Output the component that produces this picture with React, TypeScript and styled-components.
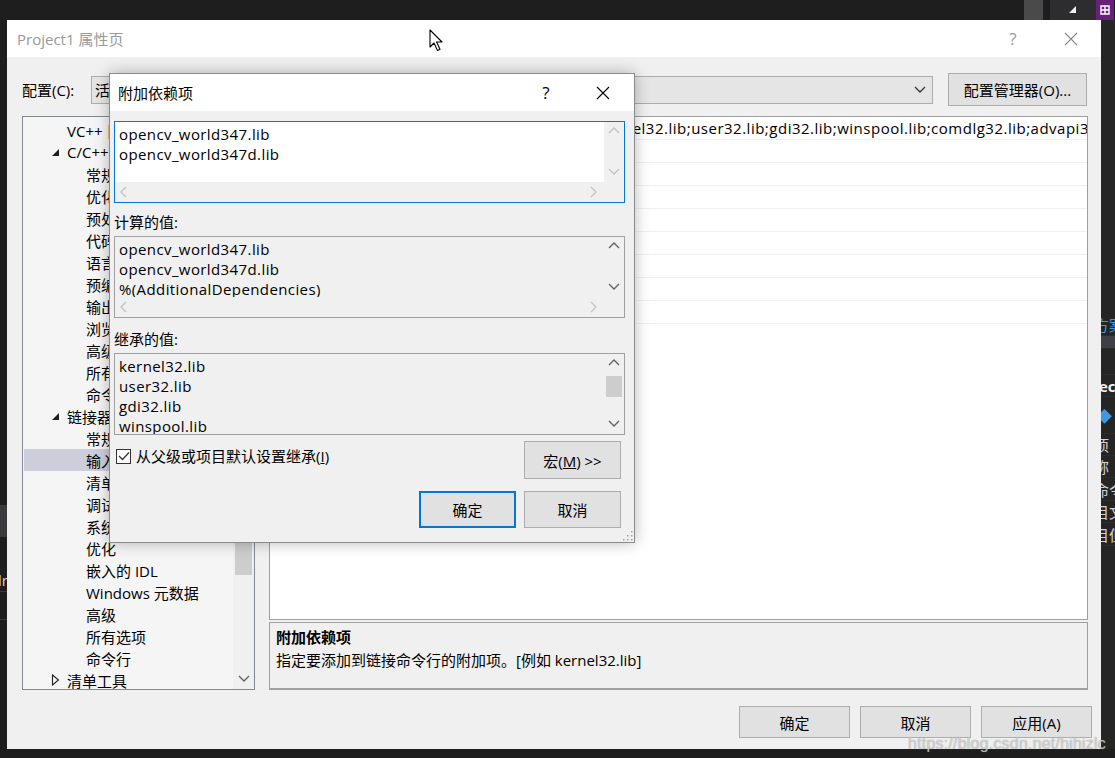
import React from 'react';
import styled, { createGlobalStyle } from 'styled-components';

const GlobalStyle = createGlobalStyle`
  html, body {
    margin: 0;
    padding: 0;
    background: #1e1e1e;
  }
  body {
    font-family: 'Segoe UI', 'Open Sans', 'Noto Sans CJK SC', sans-serif;
  }
`;

const FONT = `'Segoe UI', 'Open Sans', 'Noto Sans CJK SC', sans-serif`;

const Screen = styled.div`
  position: relative;
  width: 1115px;
  height: 758px;
  overflow: hidden;
  display: grid;
  grid-template-columns: 7px 1094px 14px;
  grid-template-rows: 20px 729px 9px;
  background: #1e1e1e;
  font-family: ${FONT};
  color: #000;
`;

/* ---------- dark IDE chrome around the window ---------- */

const TopStrip = styled.div`
  grid-column: 1 / 4;
  display: flex;
  justify-content: flex-end;
  align-items: stretch;
  background: #1e1e1e;
`;

const TopBlock = styled.div<{ $w: number; $bg: string }>`
  width: ${(p) => p.$w}px;
  background: ${(p) => p.$bg};
  display: flex;
  align-items: center;
  justify-content: center;
`;

const LeftStrip = styled.div`
  display: flex;
  flex-direction: column;
  background: #1e1e1e;
  overflow: hidden;
`;

const StripBand = styled.div<{ $h: number; $bg: string; $top?: number }>`
  height: ${(p) => p.$h}px;
  flex: 0 0 ${(p) => p.$h}px;
  margin-top: ${(p) => p.$top ?? 0}px;
  background: ${(p) => p.$bg};
`;

const StripText = styled.div`
  margin-top: 32px;
  margin-left: -2px;
  height: 22px;
  line-height: 22px;
  font-size: 15px;
  color: #cfcfcf;
  white-space: nowrap;
  border-bottom: 1px solid #3a3a3a;
`;

const RightStrip = styled.div`
  display: flex;
  flex-direction: column;
  background: #252526;
  overflow: hidden;
  padding-top: 294px;
  font-size: 15px;
`;

const SideText = styled.div<{ $color: string; $h: number; $bold?: boolean; $shift?: number; $bg?: string }>`
  height: ${(p) => p.$h}px;
  flex: 0 0 ${(p) => p.$h}px;
  box-sizing: border-box;
  display: flex;
  align-items: center;
  white-space: nowrap;
  margin-left: ${(p) => p.$shift ?? -7}px;
  color: ${(p) => p.$color};
  background: ${(p) => p.$bg ?? 'transparent'};
  font-weight: ${(p) => (p.$bold ? 700 : 400)};
  border-bottom: 1px solid #2d2d30;
`;

const BottomStrip = styled.div`
  grid-column: 1 / 4;
  background: #1e1e1e;
`;

/* ---------- property pages window ---------- */

const Window = styled.div`
  display: flex;
  flex-direction: column;
  background: #f0f0f0;
  min-width: 0;
`;

const TitleBar = styled.div<{ $h: number; $pad: number; $color: string }>`
  height: ${(p) => p.$h}px;
  flex: 0 0 ${(p) => p.$h}px;
  display: flex;
  align-items: center;
  background: #fff;
  padding-left: ${(p) => p.$pad}px;
  color: ${(p) => p.$color};
  font-size: 15px;
`;

const TitleText = styled.div`
  flex: 1;
  white-space: nowrap;
`;

const TitleButton = styled.div<{ $w: number }>`
  width: ${(p) => p.$w}px;
  height: 100%;
  display: flex;
  align-items: center;
  justify-content: center;
  font-size: 17px;
`;

const Content = styled.div`
  display: flex;
  flex-direction: column;
  padding: 16px 13px 0 15px;
  min-width: 0;
`;

const ConfigRow = styled.div`
  display: flex;
  align-items: center;
  height: 33px;
  font-size: 15px;
`;

const ConfigLabel = styled.div`
  width: 69px;
  white-space: nowrap;
`;

const Combo = styled.div`
  box-sizing: border-box;
  width: 842px;
  height: 28px;
  border: 1px solid #adadad;
  background: #e5e5e5;
  display: flex;
  align-items: center;
  padding: 0 6px 0 3px;
`;

const ComboText = styled.div`
  flex: 1;
`;

const PushButton = styled.button<{ $w: number; $h: number; $default?: boolean }>`
  box-sizing: border-box;
  width: ${(p) => p.$w}px;
  height: ${(p) => p.$h}px;
  flex: 0 0 ${(p) => p.$w}px;
  background: #e1e1e1;
  border: ${(p) => (p.$default ? '2px solid #0078d7' : '1px solid #adadad')};
  font-family: ${FONT};
  font-size: 15px;
  color: #000;
  padding: 0;
  white-space: nowrap;
`;

const ConfigManager = styled(PushButton)`
  margin-left: 15px;
`;

const MainArea = styled.div`
  margin-top: 10px;
  height: 574px;
  display: grid;
  grid-template-columns: 233px minmax(0, 1fr);
  gap: 14px;
`;

/* tree */

const Tree = styled.div`
  box-sizing: border-box;
  border: 1px solid #828790;
  background: #f5f5f5;
  display: flex;
  overflow: hidden;
`;

const TreeList = styled.div`
  flex: 1;
  padding-top: 2px;
  overflow: hidden;
  font-size: 15px;
`;

const TreeRow = styled.div<{ $level: number; $selected?: boolean }>`
  height: 22px;
  display: flex;
  align-items: center;
  margin-left: 1px;
  padding-left: ${(p) => (p.$level === 1 ? 27 : 46)}px;
  background: ${(p) => (p.$selected ? '#cccedb' : 'transparent')};
  white-space: nowrap;
`;

const Expander = styled.span`
  width: 16px;
  flex: 0 0 16px;
  display: flex;
  align-items: center;
`;

const VScroll = styled.div<{ $w?: number }>`
  width: ${(p) => p.$w ?? 20}px;
  flex: 0 0 ${(p) => p.$w ?? 20}px;
  display: flex;
  flex-direction: column;
  background: #f0f0f0;
`;

const ArrowCell = styled.div`
  height: 20px;
  flex: 0 0 20px;
  display: flex;
  align-items: center;
  justify-content: center;
`;

const Track = styled.div`
  flex: 1;
  display: flex;
  flex-direction: column;
  padding: 0 2px;
`;

const Thumb = styled.div<{ $offset: number; $size: number }>`
  margin-top: ${(p) => p.$offset}px;
  height: ${(p) => p.$size}px;
  background: #cdcdcd;
`;

/* right column */

const RightCol = styled.div`
  display: flex;
  flex-direction: column;
  gap: 2px;
  min-width: 0;
`;

const Grid = styled.div`
  box-sizing: border-box;
  height: 504px;
  border: 1px solid #a0a0a0;
  background: #fff;
  overflow: hidden;
  font-size: 15px;
`;

const GridRow = styled.div`
  height: 23px;
  box-sizing: border-box;
  border-bottom: 1px solid #f0f0f0;
  display: flex;
  align-items: center;
  white-space: nowrap;
`;

const GridName = styled.div`
  width: 329px;
  flex: 0 0 329px;
  padding-left: 6px;
  box-sizing: border-box;
  overflow: hidden;
`;

const GridValue = styled.div`
  flex: 1;
  min-width: 0;
  overflow: hidden;
  letter-spacing: 0.5px;
`;

const DescBox = styled.div`
  flex: 1;
  box-sizing: border-box;
  border: 1px solid #a0a0a0;
  border-bottom-width: 2px;
  background: #f0f0f0;
  padding: 3px 6px;
  font-size: 15px;
  line-height: 23px;
`;

const DescTitle = styled.div`
  font-weight: 700;
`;

const Footer = styled.div`
  display: flex;
  justify-content: flex-end;
  gap: 10px;
  padding: 16px 9px 11px 0;
`;

/* ---------- additional dependencies dialog ---------- */

const Dialog = styled.div`
  position: absolute;
  left: 109px;
  top: 73px;
  width: 526px;
  height: 470px;
  box-sizing: border-box;
  border: 1px solid #8a8a8a;
  background: #f0f0f0;
  display: flex;
  flex-direction: column;
  box-shadow: 0 0 14px rgba(0, 0, 0, 0.28);
`;

const DialogBody = styled.div`
  flex: 1;
  display: flex;
  flex-direction: column;
  padding: 10px 9px 0 4px;
  position: relative;
`;

const TextBox = styled.div<{ $focus?: boolean; $ro?: boolean; $hbar?: boolean }>`
  box-sizing: border-box;
  height: 82px;
  flex: 0 0 82px;
  border: 1px solid ${(p) => (p.$focus ? '#0078d7' : '#a0a0a0')};
  background: ${(p) => (p.$ro ? '#f0f0f0' : '#fff')};
  display: grid;
  grid-template-columns: minmax(0, 1fr) 20px;
  grid-template-rows: ${(p) => (p.$hbar ? '1fr 20px' : '1fr')};
  overflow: hidden;
`;

const TextLines = styled.div`
  padding: 2px 4px 0;
  overflow: hidden;
  font-size: 15px;
  line-height: 20px;
  letter-spacing: 0.4px;
  white-space: nowrap;
`;

const HScroll = styled.div`
  display: flex;
  align-items: center;
  justify-content: space-between;
  background: #f0f0f0;
`;

const Corner = styled.div`
  background: #f0f0f0;
`;

const FieldLabel = styled.div<{ $top: number }>`
  padding-top: ${(p) => p.$top}px;
  padding-bottom: 4px;
  line-height: 20px;
  font-size: 15px;
`;

const OptionRow = styled.div`
  margin-top: 6px;
  display: flex;
  justify-content: space-between;
  align-items: flex-start;
  padding-right: 4px;
`;

const CheckLabel = styled.label`
  display: flex;
  align-items: center;
  gap: 5px;
  margin-top: 7px;
  margin-left: 2px;
  font-size: 15px;
  line-height: 16px;
`;

const CheckBox = styled.span`
  box-sizing: border-box;
  width: 15px;
  height: 15px;
  border: 1px solid #333;
  background: #fff;
  display: flex;
  align-items: center;
  justify-content: center;
`;

const ActionRow = styled.div`
  margin-top: 12px;
  display: flex;
  justify-content: flex-end;
  gap: 8px;
  padding-right: 4px;
`;

const Grip = styled.svg`
  position: absolute;
  right: 1px;
  bottom: 1px;
`;

/* ---------- overlays ---------- */

const Cursor = styled.svg`
  position: absolute;
  left: 429px;
  top: 29px;
`;

const Watermark = styled.div`
  position: absolute;
  right: 9px;
  bottom: 5px;
  font-family: 'Liberation Sans', sans-serif;
  font-size: 16px;
  color: rgba(255, 255, 255, 0.55);
  text-shadow: 0 0 1px rgba(120, 120, 120, 0.9);
  letter-spacing: 0.2px;
`;

/* ---------- icons ---------- */

type Dir = 'up' | 'down' | 'left' | 'right';

const chevronPoints: Record<Dir, string> = {
  up: '1,7 6,2 11,7',
  down: '1,3 6,8 11,3',
  left: '7,1 2,6 7,11',
  right: '3,1 8,6 3,11',
};

const Chevron = ({ dir, color = '#606060' }: { dir: Dir; color?: string }) => (
  <svg width="12" height="12" viewBox="0 0 12 12">
    <polyline points={chevronPoints[dir]} fill="none" stroke={color} strokeWidth="1.3" />
  </svg>
);

const CloseIcon = ({ color = '#000' }: { color?: string }) => (
  <svg width="14" height="14" viewBox="0 0 14 14">
    <path d="M1 1 L13 13 M13 1 L1 13" stroke={color} strokeWidth="1.1" />
  </svg>
);

const ExpandedArrow = () => (
  <svg width="9" height="9" viewBox="0 0 9 9">
    <polygon points="8,1 8,8 1,8" fill="#1e1e1e" />
  </svg>
);

const CollapsedArrow = () => (
  <svg width="9" height="12" viewBox="0 0 9 12">
    <polygon points="1.5,1 7.5,6 1.5,11" fill="none" stroke="#1e1e1e" strokeWidth="1.1" />
  </svg>
);

const Check = () => (
  <svg width="12" height="10" viewBox="0 0 12 10">
    <polyline points="1,5 4.5,8.5 11,1.5" fill="none" stroke="#333" strokeWidth="1.3" />
  </svg>
);

/* ---------- data ---------- */

type TreeItem = { label: string; level: 1 | 2; state?: 'open' | 'closed'; selected?: boolean };

const treeItems: TreeItem[] = [
  { label: 'VC++ 目录', level: 1 },
  { label: 'C/C++', level: 1, state: 'open' },
  { label: '常规', level: 2 },
  { label: '优化', level: 2 },
  { label: '预处理器', level: 2 },
  { label: '代码生成', level: 2 },
  { label: '语言', level: 2 },
  { label: '预编译头', level: 2 },
  { label: '输出文件', level: 2 },
  { label: '浏览信息', level: 2 },
  { label: '高级', level: 2 },
  { label: '所有选项', level: 2 },
  { label: '命令行', level: 2 },
  { label: '链接器', level: 1, state: 'open' },
  { label: '常规', level: 2 },
  { label: '输入', level: 2, selected: true },
  { label: '清单文件', level: 2 },
  { label: '调试', level: 2 },
  { label: '系统', level: 2 },
  { label: '优化', level: 2 },
  { label: '嵌入的 IDL', level: 2 },
  { label: 'Windows 元数据', level: 2 },
  { label: '高级', level: 2 },
  { label: '所有选项', level: 2 },
  { label: '命令行', level: 2 },
  { label: '清单工具', level: 1, state: 'closed' },
  { label: 'XML 文档生成器', level: 1, state: 'closed' },
];

const gridRows: [string, string][] = [
  [
    '附加依赖项',
    'kernel32.lib;user32.lib;gdi32.lib;winspool.lib;comdlg32.lib;advapi32.lib;shell32.lib;ole32.lib;oleaut32.lib;uuid.lib;odbc32.lib;odbccp32.lib;%(AdditionalDependencies)',
  ],
  ['忽略所有默认库', ''],
  ['忽略特定默认库', ''],
  ['模块定义文件', ''],
  ['将模块添加到程序集', ''],
  ['嵌入托管资源文件', ''],
  ['强制符号引用', ''],
  ['延迟加载的 DLL', ''],
  ['程序集链接资源', ''],
];

const sideItems: { text: string; color: string; h: number; bold?: boolean; shift?: number; bg?: string }[] = [
  { text: '方案', color: '#3b9ae1', h: 22 },
  { text: '', color: '#ccc', h: 13, bg: '#3f3f46' },
  { text: '', color: '#ccc', h: 26 },
  { text: 'ect', color: '#f1f1f1', h: 22, bold: true, shift: -2 },
  { text: '◆', color: '#3b9ae1', h: 37, shift: -4 },
  { text: '项', color: '#d4d4d4', h: 22 },
  { text: '称', color: '#d4d4d4', h: 22 },
  { text: '命令', color: '#d4d4d4', h: 23 },
  { text: '目文', color: '#d4d4d4', h: 22 },
  { text: '目但', color: '#d4d4d4', h: 23 },
];

export default function App() {
  return (
    <>
      <GlobalStyle />
      <Screen>
        <TopStrip>
          <TopBlock $w={19} $bg="#4a4a4a" />
          <TopBlock $w={7} $bg="#1e1e1e" />
          <TopBlock $w={46} $bg="#2d2d30">
            <svg width="8" height="8" viewBox="0 0 8 8">
              <polygon points="7,0 7,7 0,7" fill="#f1f1f1" />
            </svg>
          </TopBlock>
          <TopBlock $w={18} $bg="#68217a">
            <svg width="12" height="12" viewBox="0 0 12 12">
              <path d="M2 2 H10 V10 H2 Z M6 2 V10 M2 6 H10" stroke="#fff" strokeWidth="1.4" fill="none" />
            </svg>
          </TopBlock>
          <TopBlock $w={1} $bg="#1e1e1e" />
        </TopStrip>

        <LeftStrip>
          <StripBand $top={485} $h={32} $bg="#3a3a3d" />
          <StripText>lr</StripText>
          <StripBand $top={27} $h={1} $bg="#3a3a3a" />
        </LeftStrip>

        <Window>
          <TitleBar $h={37} $pad={10} $color="#999">
            <TitleText>Project1 属性页</TitleText>
            <TitleButton $w={56}>?</TitleButton>
            <TitleButton $w={60}>
              <CloseIcon color="#888" />
            </TitleButton>
          </TitleBar>

          <Content>
            <ConfigRow>
              <ConfigLabel>配置(C):</ConfigLabel>
              <Combo>
                <ComboText>活动(Debug)</ComboText>
                <Chevron dir="down" color="#333" />
              </Combo>
              <ConfigManager $w={139} $h={33}>
                配置管理器(O)...
              </ConfigManager>
            </ConfigRow>

            <MainArea>
              <Tree>
                <TreeList>
                  {treeItems.map((item, i) => (
                    <TreeRow key={i} $level={item.level} $selected={item.selected}>
                      <Expander>
                        {item.state === 'open' && <ExpandedArrow />}
                        {item.state === 'closed' && <CollapsedArrow />}
                      </Expander>
                      {item.label}
                    </TreeRow>
                  ))}
                </TreeList>
                <VScroll $w={21}>
                  <ArrowCell>
                    <Chevron dir="up" />
                  </ArrowCell>
                  <Track>
                    <Thumb $offset={190} $size={248} />
                  </Track>
                  <ArrowCell>
                    <Chevron dir="down" />
                  </ArrowCell>
                </VScroll>
              </Tree>

              <RightCol>
                <Grid>
                  {gridRows.map(([name, value], i) => (
                    <GridRow key={i}>
                      <GridName>{name}</GridName>
                      <GridValue>{value}</GridValue>
                    </GridRow>
                  ))}
                </Grid>
                <DescBox>
                  <DescTitle>附加依赖项</DescTitle>
                  <div>指定要添加到链接命令行的附加项。[例如 kernel32.lib]</div>
                </DescBox>
              </RightCol>
            </MainArea>
          </Content>

          <Footer>
            <PushButton $w={111} $h={32}>确定</PushButton>
            <PushButton $w={111} $h={32}>取消</PushButton>
            <PushButton $w={111} $h={32}>应用(A)</PushButton>
          </Footer>
        </Window>

        <RightStrip>
          {sideItems.map((s, i) => (
            <SideText key={i} $color={s.color} $h={s.h} $bold={s.bold} $shift={s.shift} $bg={s.bg}>
              {s.text || '\u00a0'}
            </SideText>
          ))}
        </RightStrip>

        <BottomStrip />

        <Dialog>
          <TitleBar $h={37} $pad={8} $color="#000">
            <TitleText>附加依赖项</TitleText>
            <TitleButton $w={52}>?</TitleButton>
            <TitleButton $w={62}>
              <CloseIcon />
            </TitleButton>
          </TitleBar>

          <DialogBody>
            <TextBox $focus $hbar>
              <TextLines>
                <div>opencv_world347.lib</div>
                <div>opencv_world347d.lib</div>
              </TextLines>
              <VScroll>
                <ArrowCell>
                  <Chevron dir="up" color="#c2c2c2" />
                </ArrowCell>
                <Track />
                <ArrowCell>
                  <Chevron dir="down" color="#c2c2c2" />
                </ArrowCell>
              </VScroll>
              <HScroll>
                <ArrowCell>
                  <Chevron dir="left" color="#c2c2c2" />
                </ArrowCell>
                <ArrowCell>
                  <Chevron dir="right" color="#c2c2c2" />
                </ArrowCell>
              </HScroll>
              <Corner />
            </TextBox>

            <FieldLabel $top={9}>计算的值:</FieldLabel>
            <TextBox $ro $hbar>
              <TextLines>
                <div>opencv_world347.lib</div>
                <div>opencv_world347d.lib</div>
                <div>%(AdditionalDependencies)</div>
              </TextLines>
              <VScroll>
                <ArrowCell>
                  <Chevron dir="up" />
                </ArrowCell>
                <Track />
                <ArrowCell>
                  <Chevron dir="down" />
                </ArrowCell>
              </VScroll>
              <HScroll>
                <ArrowCell>
                  <Chevron dir="left" color="#c2c2c2" />
                </ArrowCell>
                <ArrowCell>
                  <Chevron dir="right" color="#c2c2c2" />
                </ArrowCell>
              </HScroll>
              <Corner />
            </TextBox>

            <FieldLabel $top={11}>继承的值:</FieldLabel>
            <TextBox $ro>
              <TextLines>
                <div>kernel32.lib</div>
                <div>user32.lib</div>
                <div>gdi32.lib</div>
                <div>winspool.lib</div>
                <div>comdlg32.lib</div>
              </TextLines>
              <VScroll>
                <ArrowCell>
                  <Chevron dir="up" />
                </ArrowCell>
                <Track>
                  <Thumb $offset={2} $size={21} />
                </Track>
                <ArrowCell>
                  <Chevron dir="down" />
                </ArrowCell>
              </VScroll>
            </TextBox>

            <OptionRow>
              <CheckLabel>
                <CheckBox>
                  <Check />
                </CheckBox>
                <span>
                  从父级或项目默认设置继承(<u>I</u>)
                </span>
              </CheckLabel>
              <PushButton $w={97} $h={38}>
                宏(<u>M</u>) &gt;&gt;
              </PushButton>
            </OptionRow>

            <ActionRow>
              <PushButton $w={97} $h={37} $default>
                确定
              </PushButton>
              <PushButton $w={97} $h={37}>
                取消
              </PushButton>
            </ActionRow>

            <Grip width="12" height="12" viewBox="0 0 12 12">
              {[
                [10, 2],
                [10, 6],
                [6, 6],
                [10, 10],
                [6, 10],
                [2, 10],
              ].map(([x, y], i) => (
                <rect key={i} x={x} y={y} width="1.5" height="1.5" fill="#a0a0a0" />
              ))}
            </Grip>
          </DialogBody>
        </Dialog>

        <Cursor width="16" height="24" viewBox="0 0 16 24">
          <path
            d="M1 1 L1 18 L5 14 L8.5 21.5 L11 20.3 L7.6 13 L13 13 Z"
            fill="#fff"
            stroke="#000"
            strokeWidth="1.1"
            strokeLinejoin="round"
          />
        </Cursor>

        <Watermark>https://blog.csdn.net/hihizlc</Watermark>
      </Screen>
    </>
  );
}
